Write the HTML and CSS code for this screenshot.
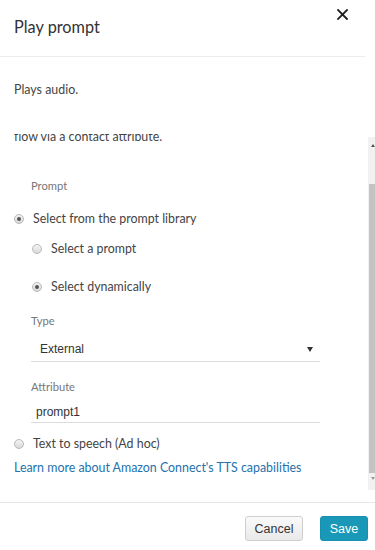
FILE: index.html
```html
<!DOCTYPE html>
<html>
<head>
<meta charset="utf-8">
<link rel="stylesheet" href="styles.css">
</head>
<body>
<div class="dialog">
  <header class="hdr">
    <h1 class="title">Play prompt</h1>
    <span class="close" aria-label="Close">
      <svg width="11" height="11" viewBox="0 0 11 11"><path d="M1 1L10 10M10 1L1 10" stroke="#1f1f1f" stroke-width="1.8" stroke-linecap="square"/></svg>
    </span>
  </header>
  <p class="desc">Plays audio.</p>
  <div class="body">
    <div class="scroll">
      <p class="clipped">flow via a contact attribute.</p>
      <div class="label first">Prompt</div>
      <label class="radio r1"><span class="dot on"></span>Select from the prompt library</label>
      <label class="radio r2 sub"><span class="dot"></span>Select a prompt</label>
      <label class="radio r3 sub"><span class="dot on"></span>Select dynamically</label>
      <div class="label l-type">Type</div>
      <div class="select"><span>External</span><span class="caret"></span></div>
      <div class="label l-attr">Attribute</div>
      <div class="input">prompt1</div>
      <label class="radio r4"><span class="dot"></span>Text to speech (Ad hoc)</label>
      <a class="link">Learn more about Amazon Connect's TTS capabilities</a>
    </div>
    <div class="sbar">
      <span class="arrow up"></span>
      <span class="thumb"></span>
      <span class="arrow down"></span>
    </div>
  </div>
  <footer class="ftr">
    <button class="btn cancel">Cancel</button>
    <button class="btn save">Save</button>
  </footer>
</div>
</body>
</html>
```
FILE: styles.css
```css
html, body {
  margin: 0;
  padding: 0;
  background: #fff;
}
body {
  font-family: Lato, "Open Sans", sans-serif;
  color: #444;
  width: 375px;
  height: 550px;
  overflow: hidden;
}
.dialog {
  display: flex;
  flex-direction: column;
  height: 550px;
}
.hdr {
  height: 56px;
  margin-right: 10px;
  border-bottom: 1px solid #ececec;
  display: flex;
  justify-content: space-between;
  align-items: flex-start;
  padding: 0 17px 0 14px;
}
.title {
  margin: 17px 0 0 0;
  font-size: 16.3px;
  line-height: 20px;
  font-weight: 400;
  color: #333;
}
.close {
  margin-top: 9px;
  display: block;
  line-height: 0;
}
.desc {
  margin: 0;
  height: 77px;
  box-sizing: border-box;
  padding: 23px 0 0 14px;
  font-size: 12.4px;
  line-height: 20px;
  color: #444;
}
.body {
  height: 368px;
  display: flex;
}
.scroll {
  flex: 1;
  overflow: hidden;
  padding-left: 14px;
}
.clipped {
  margin: -7px 0 0 0;
  font-size: 12.4px;
  line-height: 20px;
  color: #444;
}
.label {
  font-size: 11.2px;
  line-height: 16px;
  color: #777;
  padding-left: 17px;
}
.label.first { margin-top: 31px; }
.label.l-type { margin-top: 16px; }
.label.l-attr { margin-top: 17px; }
.radio {
  display: flex;
  align-items: center;
  font-size: 12.4px;
  line-height: 20px;
  color: #444;
}
.radio.sub { padding-left: 18px; }
.r1 { margin-top: 15px; }
.r2 { margin-top: 10px; }
.r3 { margin-top: 18px; }
.r4 { margin-top: 11px; }
.dot {
  width: 10px;
  height: 10px;
  border-radius: 50%;
  border: 1px solid #b9b9b9;
  box-sizing: border-box;
  background: linear-gradient(#f4f4f4, #d9d9d9);
  margin-right: 9px;
  position: relative;
  flex: none;
}
.dot.on::after {
  content: "";
  position: absolute;
  left: 2px;
  top: 2px;
  width: 4px;
  height: 4px;
  border-radius: 50%;
  background: #555;
}
.select, .input {
  margin-left: 17px;
  border-bottom: 1px solid #dcdcdc;
  font-family: "Liberation Sans", Arial, sans-serif;
  font-size: 12px;
  color: #333;
  box-sizing: content-box;
}
.select {
  margin-top: 8px;
  height: 24px;
  line-height: 24px;
  padding-left: 9px;
  width: 280px;
  display: flex;
  justify-content: space-between;
  align-items: center;
}
.caret {
  width: 0;
  height: 0;
  border-left: 3px solid transparent;
  border-right: 3px solid transparent;
  border-top: 5px solid #333;
  margin-right: 7px;
}
.input {
  margin-top: 3px;
  height: 20px;
  padding-top: 4px;
  line-height: 20px;
  padding-left: 5px;
  width: 284px;
}
.link {
  display: block;
  margin-top: 4px;
  font-size: 12.4px;
  line-height: 20px;
  color: #2372ad;
}
.sbar {
  width: 7px;
  margin-top: 3px;
  height: 353px;
  background: #f1f1f1;
  display: flex;
  flex-direction: column;
  align-items: flex-end;
}
.arrow {
  width: 0;
  height: 0;
  border-left: 2px solid transparent;
  border-right: 2px solid transparent;
}
.arrow.up {
  margin-top: 7px;
  border-bottom: 3px solid #555;
}
.arrow.down {
  margin-top: 4px;
  border-top: 3px solid #999;
}
.thumb {
  margin-top: 37px;
  width: 6px;
  height: 289px;
  background: #c3c3c3;
}
.ftr {
  border-top: 1px solid #e6e6e6;
  flex: 1;
  display: flex;
  justify-content: flex-end;
  align-items: flex-start;
  padding: 13px 7px 0 0;
  gap: 17px;
}
.btn {
  height: 25px;
  border-radius: 3px;
  font-family: "Liberation Sans", Arial, sans-serif;
  font-size: 12.5px;
  padding: 0;
  margin: 0;
  cursor: pointer;
}
.cancel {
  width: 58px;
  border: 1px solid #cfcfcf;
  background: linear-gradient(#fafafa, #e9e9e9);
  color: #333;
}
.save {
  width: 48px;
  border: 1px solid #1690b0;
  background: #1a98b8;
  color: #fff;
}
```
